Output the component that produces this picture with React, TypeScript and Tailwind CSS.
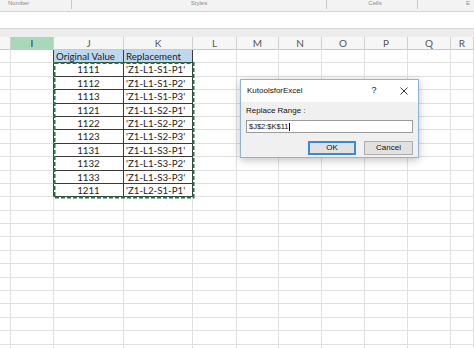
import React from 'react'

const cols = ['', 'I', 'J', 'K', 'L', 'M', 'N', 'O', 'P', 'Q', 'R']
const widths = 'grid-cols-[11px_43px_70px_69px_44px_42px_43px_43px_43px_43px_1fr]'

const data: Array<[string, string]> = [
  ['1111', "'Z1-L1-S1-P1'"],
  ['1112', "'Z1-L1-S1-P2'"],
  ['1113', "'Z1-L1-S1-P3'"],
  ['1121', "'Z1-L1-S2-P1'"],
  ['1122', "'Z1-L1-S2-P2'"],
  ['1123', "'Z1-L1-S2-P3'"],
  ['1131', "'Z1-L1-S3-P1'"],
  ['1132', "'Z1-L1-S3-P2'"],
  ['1133', "'Z1-L1-S3-P3'"],
  ['1211', "'Z1-L2-S1-P1'"],
]

const cellFont = { fontFamily: 'Lato, "Liberation Sans", sans-serif' }

// ribbon group labels
const Ribbon = () => (
  <div className="h-[12px] bg-[#f3f3f3] border-b border-[#d4d4d4] overflow-hidden text-[6px] text-[#8a8a8a] leading-[7px] font-['Liberation_Sans',sans-serif]">
    <div className="flex h-[9px]">
      <div className="w-[72px] border-r border-[#c8c8c8] pl-[8px]">Number</div>
      <div className="w-[255px] border-r border-[#c8c8c8] text-center">Styles</div>
      <div className="w-[91px] border-r border-[#c8c8c8] text-center pl-[6px]">Cells</div>
      <div className="flex-1 pl-[48px]">E</div>
    </div>
  </div>
)

function Cell({ row, col }: { row: number; col: number }) {
  const inTable = (col === 2 || col === 3) && row <= 10
  let cls = 'border-r border-b border-[#e0e0e0]'
  let text: React.ReactNode = null
  if (inTable) {
    cls = 'border-r border-b border-[#3a3a3a]'
    if (row === 0) {
      cls += ' bg-[#bdd7ee] pl-[2px] text-left'
      text = col === 2 ? 'Original Value' : 'Replacement'
    } else {
      const d = data[row - 1]
      text = col === 2 ? d[0] : d[1]
      cls += col === 2 ? ' text-center' : ' pl-[2px] text-left'
    }
  }
  if (col === 1 && row <= 10) cls = 'border-b border-[#e0e0e0] border-r border-r-[#3a3a3a]'
  return (
    <div className={`h-[13.4px] leading-[13px] text-[9.7px] text-[#222] whitespace-nowrap overflow-hidden ${cls}`} style={cellFont}>
      {text}
    </div>
  )
}

const Dialog = () => (
  <div className="absolute left-[240px] top-[79px] w-[179px] h-[79px] border border-[#8fb3d9] bg-[#f0f0f0] shadow-[0_2px_8px_rgba(0,0,0,0.25)] font-['Liberation_Sans',sans-serif] text-[8px] text-[#111]">
    <div className="h-[22px] bg-white flex items-center pl-[6px] pr-[10px]">
      <span className="flex-1">KutoolsforExcel</span>
      <span className="w-[8px] text-center mr-[22px] text-[9px]">?</span>
      <svg width="8" height="8" viewBox="0 0 8 8">
        <path d="M0.5 0.5 L7.5 7.5 M7.5 0.5 L0.5 7.5" stroke="#222" strokeWidth="0.9" />
      </svg>
    </div>
    <div className="px-[5px] pt-[4px]">
      <div className="leading-[10px]">Replace Range :</div>
      <div className="mt-[4px] h-[13px] bg-white border border-[#9a9a9a] flex items-center pl-[2px] text-[7.5px]">
        $J$2:$K$11<span className="w-px h-[8px] bg-black ml-px" />
      </div>
      <div className="flex justify-end gap-[8px] mt-[8px]">
        <div className="w-[48px] h-[14px] bg-[#e1e1e1] border-2 border-[#3b88d4] flex items-center justify-center">OK</div>
        <div className="w-[49px] h-[14px] bg-[#e1e1e1] border border-[#adadad] flex items-center justify-center">Cancel</div>
      </div>
    </div>
  </div>
)

export default function App() {
  const rows = Array.from({ length: 23 }, (_, i) => i)
  return (
    <div className="w-[474px] h-[348px] overflow-hidden bg-white relative">
      <Ribbon />
      <div className="h-[17px] bg-white border-b border-[#d6d6d6]" />
      <div className="h-[8px] bg-[#ececec]" />
      <div className={`grid ${widths} h-[13px] bg-[#f6f6f6] border-b border-[#c9c9c9]`} style={cellFont}>
        {cols.map((c, i) => (
          <div
            key={i}
            className={`text-[10px] leading-[13px] text-center border-r border-[#d0d0d0] ${i === 1 ? 'bg-[#a8d8b9] text-[#333]' : 'text-[#555]'}`}
          >
            {c}
          </div>
        ))}
      </div>
      <div className="relative">
        <div className={`grid ${widths}`}>
          {rows.map((r) => cols.map((_, c) => <Cell key={`${r}-${c}`} row={r} col={c} />))}
        </div>
        <svg className="absolute left-[53px] top-[12px]" width="142" height="137" viewBox="0 0 142 137">
          <rect x="1.5" y="1" width="139" height="134.5" fill="none" stroke="#217346" strokeWidth="2" strokeDasharray="4 2" />
        </svg>
      </div>
      <Dialog />
    </div>
  )
}
